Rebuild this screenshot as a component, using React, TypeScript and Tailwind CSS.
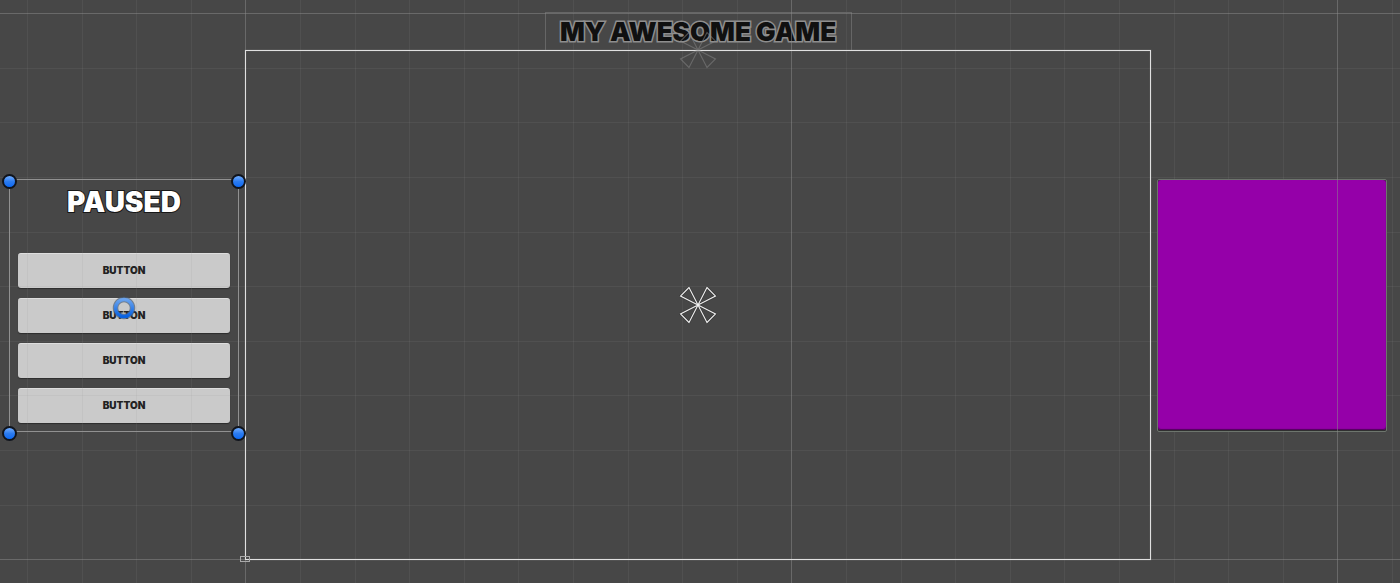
const CELL = 54.6;
const ORIGIN_X = 245.3;
const ORIGIN_Y = 13.3;
const steps = Array.from({ length: 80 }, (_, i) => i - 10);
const minorSteps = steps.filter((n) => n % 10 !== 0);
const majorSteps = steps.filter((n) => n % 10 === 0);

function GridLines({ at, className }: { at: number[]; className: string }) {
  return (
    <svg aria-hidden="true" className={`pointer-events-none absolute inset-0 h-full w-full ${className}`} fill="none">
      {at.map((n) => {
        const x = Math.round(ORIGIN_X + n * CELL) + 0.5;
        const y = Math.floor(ORIGIN_Y + n * CELL + 0.4) + 0.5;
        return (
          <g key={n} stroke="currentColor">
            <line x1={x} x2={x} y1="0" y2="100%" />
            <line x1="0" x2="100%" y1={y} y2={y} />
          </g>
        );
      })}
    </svg>
  );
}

const ANCHOR_PATH = "M19 19 1.5 10 10 1.5ZM19 19 28 1.5 36.5 10ZM19 19 1.5 28 10 36.5ZM19 19 36.5 28 28 36.5Z";

function Anchor({ className, shaded = false }: { className: string; shaded?: boolean }) {
  return (
    <svg aria-hidden="true" viewBox="0 0 38 38" className={`pointer-events-none absolute size-[38px] ${className}`} fill="none">
      {shaded && <path d={ANCHOR_PATH} stroke="#222" strokeOpacity="0.4" strokeWidth="2.5" />}
      <path d={ANCHOR_PATH} stroke="currentColor" strokeWidth="1.1" />
    </svg>
  );
}

function Handle({ className }: { className: string }) {
  return (
    <span
      className={`absolute z-30 size-[15px] rounded-full border-2 border-[#10141c] bg-linear-to-b from-[#70adff] via-[#2c7cf0] to-[#0869f4] ${className}`}
    />
  );
}

export default function App() {
  return (
    <main className="relative grid min-h-screen grid-cols-[245px_minmax(0,1fr)_249px] grid-rows-[38px_minmax(0,1fr)] overflow-hidden bg-[#474747] pt-3 pb-[23px] font-['Inter',sans-serif]">
      <GridLines at={minorSteps} className="z-10 text-[#909090]/12" />
      <GridLines at={majorSteps} className="z-20 text-[#8c8c8c]/50" />

      <header className="relative z-10 col-start-2 flex w-[307px] items-center justify-center justify-self-center border border-b-0 border-[#666]">
        <h1 className="text-[26px] leading-8 font-black whitespace-nowrap text-[#101010] [-webkit-text-stroke:3px_#8e8e8e] [paint-order:stroke_fill]">
          MY AWESOME GAME
        </h1>
      </header>

      <section aria-label="Pause menu" className="relative col-start-1 row-start-2 ml-[9px] flex h-[253px] w-[230px] flex-col self-center border border-[#919191] px-2 pt-1">
        <h2 className="text-center text-[28px] leading-9 font-black text-white [-webkit-text-stroke:2px_#171717] [paint-order:stroke_fill]">
          PAUSED
        </h2>
        <div className="mt-[33px] flex flex-col gap-[10px]">
          {[1, 2, 3, 4].map((n) => (
            <button
              key={n}
              type="button"
              className="h-[35px] rounded-[3px] border-t border-[#dedede] bg-[#cacaca] pb-px text-[10px] leading-4 font-black text-[#222] shadow-[0_1px_1px_#2d2d2d]"
            >
              BUTTON
            </button>
          ))}
        </div>
        <Handle className="-top-[6px] -left-2" />
        <Handle className="-top-[6px] -right-2" />
        <Handle className="-bottom-[10px] -left-2" />
        <Handle className="-right-2 -bottom-[10px]" />
        <svg aria-hidden="true" viewBox="0 0 24 24" className="absolute top-[116px] left-[102px] z-30 size-6">
          <defs>
            <linearGradient id="pivot" x1="0" y1="0" x2="0" y2="1">
              <stop stopColor="#6aa3ee" />
              <stop offset="1" stopColor="#0862e2" />
            </linearGradient>
          </defs>
          <circle cx="12" cy="12" r="8.5" fill="none" stroke="#4c6078" strokeOpacity="0.7" strokeWidth="5.5" />
          <circle cx="12" cy="12" r="8.5" fill="none" stroke="url(#pivot)" strokeWidth="3.5" />
        </svg>
      </section>

      <section aria-label="Game canvas" className="relative z-20 col-start-2 row-start-2 border border-[#e0e0e0] shadow-[0_0_1px_#8b8b8b,inset_0_0_1px_#8b8b8b]">
        <Anchor className="-top-5 left-1/2 -translate-x-1/2 text-[#8a8a8a] opacity-50" />
        <Anchor shaded className="top-1/2 left-1/2 -translate-x-1/2 -translate-y-1/2 text-[#eee]" />
        <span className="absolute -bottom-[3px] -left-[6px] h-[6px] w-[10px] border border-[#aaa]" />
      </section>

      <section aria-label="Color panel" className="relative z-10 col-start-3 row-start-2 ml-[6px] h-[253px] w-[230px] self-center rounded-[2px] border border-[#6d756d] bg-[#303030] pb-px">
        <div className="h-full rounded-[3px] bg-[#9500a9] shadow-[inset_0_-1px_1px_#52005d]" />
      </section>
    </main>
  );
}
